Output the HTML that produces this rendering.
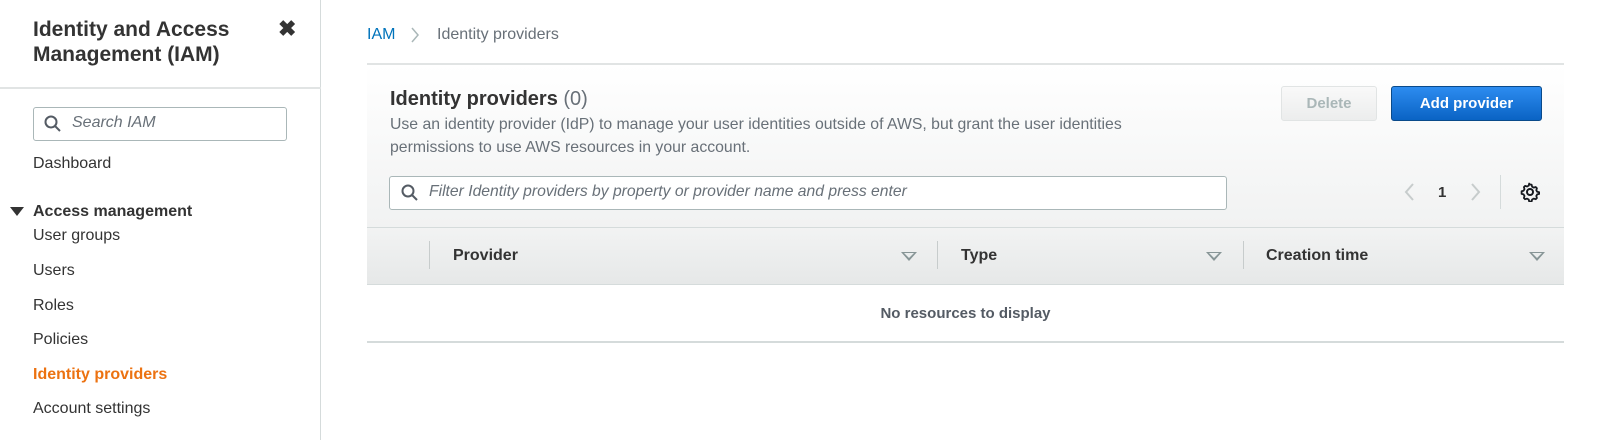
<!DOCTYPE html>
<html><head><style>
*{box-sizing:border-box;margin:0;padding:0}
body{width:1600px;height:440px;overflow:hidden;background:#fff;font-family:"Liberation Sans",Arial,sans-serif;color:#333;position:relative}
.a{position:absolute;white-space:nowrap}
.side{position:absolute;left:0;top:0;width:321px;height:440px;border-right:1px solid #d5dbdb}
.nav{font-size:16px;color:#333;left:33px}
.car{width:0;height:0;border-left:8px solid transparent;border-right:8px solid transparent;border-top:9px solid #879596;position:absolute}
.car:after{content:"";position:absolute;left:-5px;top:-8px;border-left:5px solid transparent;border-right:5px solid transparent;border-top:5px solid #eaeded}
.sep{position:absolute;top:241px;width:1px;height:28px;background:#c7cccc}
</style></head><body>
<div class="side">
<div class="a" style="left:33px;top:17px;font-size:21px;font-weight:bold;line-height:25px;color:#333">Identity and Access<br>Management (IAM)</div>
<div class="a" style="left:278px;top:16px;font-size:22px;font-weight:bold;color:#333">✖</div>
<div class="a" style="left:0;top:87px;width:321px;height:2px;background:#e1e4e4"></div>
<div class="a" style="left:33px;top:107px;width:254px;height:34px;border:1px solid #aab7b8;border-radius:3px"></div>
<svg class="a" style="left:44px;top:115px" width="18" height="18" viewBox="0 0 18 18"><circle cx="7" cy="7" r="5.5" fill="none" stroke="#545b64" stroke-width="2"/><path d="M11 11l5 5" stroke="#545b64" stroke-width="2"/></svg>
<div class="a" style="left:72px;top:114px;font-size:16px;font-style:italic;color:#687078">Search IAM</div>
<div class="a nav" style="top:155px">Dashboard</div>
<div class="a" style="left:10px;top:207px;width:0;height:0;border-left:7px solid transparent;border-right:7px solid transparent;border-top:9px solid #333"></div>
<div class="a nav" style="top:203px;font-weight:bold">Access management</div>
<div class="a nav" style="top:227px">User groups</div>
<div class="a nav" style="top:262px">Users</div>
<div class="a nav" style="top:297px">Roles</div>
<div class="a nav" style="top:331px">Policies</div>
<div class="a nav" style="top:366px;color:#ec7211;font-weight:bold">Identity providers</div>
<div class="a nav" style="top:400px">Account settings</div>
</div>
<div class="a" style="left:367px;top:26px;font-size:16px;color:#0073bb">IAM</div>
<svg class="a" style="left:410px;top:27px" width="10" height="16"><path d="M2 1l6 7-6 7" fill="none" stroke="#aab7b8" stroke-width="1.5"/></svg>
<div class="a" style="left:437px;top:26px;font-size:16px;color:#687078">Identity providers</div>
<div class="a" style="left:367px;top:63px;width:1197px;height:164px;border-top:2px solid #e1e4e4;background:linear-gradient(#fff,#f1f2f2)"></div>
<div class="a" style="left:390px;top:88px;font-size:20px;font-weight:bold;color:#333">Identity providers <span style="font-weight:normal;color:#687078">(0)</span></div>
<div class="a" style="left:390px;top:113px;font-size:15.8px;line-height:23px;color:#687078">Use an identity provider (IdP) to manage your user identities outside of AWS, but grant the user identities<br>permissions to use AWS resources in your account.</div>
<div class="a" style="left:1281px;top:86px;width:96px;height:35px;border:1px solid #e1e4e4;border-radius:3px;background:linear-gradient(#f9f9f9,#eceded);font-size:15px;font-weight:bold;color:#aab7b8;text-align:center;line-height:33px">Delete</div>
<div class="a" style="left:1391px;top:86px;width:151px;height:35px;border:1px solid #0a4a8a;border-radius:3px;background:linear-gradient(#2d8cf0,#0a63c4);font-size:15px;font-weight:bold;color:#fff;text-align:center;line-height:33px">Add provider</div>
<div class="a" style="left:389px;top:176px;width:838px;height:34px;border:1px solid #aab7b8;border-radius:3px;background:#fff"></div>
<svg class="a" style="left:401px;top:184px" width="18" height="18" viewBox="0 0 18 18"><circle cx="7" cy="7" r="5.5" fill="none" stroke="#545b64" stroke-width="2"/><path d="M11 11l5 5" stroke="#545b64" stroke-width="2"/></svg>
<div class="a" style="left:429px;top:183px;font-size:15.7px;font-style:italic;color:#687078">Filter Identity providers by property or provider name and press enter</div>
<svg class="a" style="left:1403px;top:182px" width="12" height="20"><path d="M10 2L3 10l7 8" fill="none" stroke="#c7cccc" stroke-width="2"/></svg>
<div class="a" style="left:1438px;top:184px;font-size:15px;font-weight:bold">1</div>
<svg class="a" style="left:1470px;top:182px" width="12" height="20"><path d="M2 2l7 8-7 8" fill="none" stroke="#c7cccc" stroke-width="2"/></svg>
<div class="a" style="left:1500px;top:175px;width:1px;height:34px;background:#d5dbdb"></div>
<svg class="a" style="left:1520px;top:182px" width="20" height="20" viewBox="0 0 20 20"><circle cx="10" cy="10" r="3" fill="none" stroke="#16191f" stroke-width="2"/><path d="M10 2.5l1.6.2.5 2 1.6.9 2-.6 1.2 1.2-.6 2 .9 1.6 2 .5v1.6l-2 .5-.9 1.6.6 2-1.2 1.2-2-.6-1.6.9-.5 2H9.2l-.5-2-1.6-.9-2 .6-1.2-1.2.6-2-.9-1.6-2-.5V9.2l2-.5.9-1.6-.6-2 1.2-1.2 2 .6 1.6-.9.5-2z" fill="none" stroke="#16191f" stroke-width="1.8" stroke-linejoin="round"/></svg>
<div class="a" style="left:367px;top:227px;width:1197px;height:58px;border-top:1px solid #d5dbdb;border-bottom:1px solid #d5dbdb;background:linear-gradient(#f2f3f3,#e6e8e8)"></div>
<div class="sep" style="left:429px"></div><div class="sep" style="left:937px"></div><div class="sep" style="left:1243px"></div>
<div class="a" style="left:453px;top:247px;font-size:16px;font-weight:bold;color:#333">Provider</div>
<div class="a" style="left:961px;top:247px;font-size:16px;font-weight:bold">Type</div>
<div class="a" style="left:1266px;top:247px;font-size:16px;font-weight:bold">Creation time</div>
<div class="car" style="left:901px;top:252px"></div>
<div class="car" style="left:1206px;top:252px"></div>
<div class="car" style="left:1529px;top:252px"></div>
<div class="a" style="left:367px;top:305px;width:1197px;text-align:center;font-size:15px;font-weight:bold;color:#545b64">No resources to display</div>
<div class="a" style="left:367px;top:341px;width:1197px;height:2px;background:#d5dbdb"></div>
</body></html>
